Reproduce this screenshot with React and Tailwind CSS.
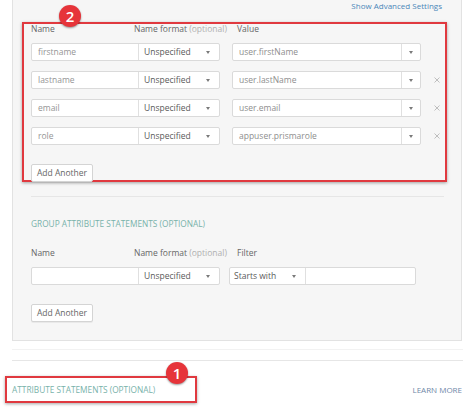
import React from 'react';

const font = { fontFamily: '"Open Sans", "Liberation Sans", sans-serif' };

const Caret = () => (
  <svg width="4" height="3" viewBox="0 0 4 3" className="shrink-0">
    <path d="M0 0 L4 0 L2 3 Z" fill="#7a7a7a" />
  </svg>
);

const Cross = () => (
  <svg width="6" height="6" viewBox="0 0 6 6">
    <path d="M0.5 0.5 L5.5 5.5 M5.5 0.5 L0.5 5.5" stroke="#b8b8b8" strokeWidth="0.9" />
  </svg>
);

const Badge = ({ n, className }) => (
  <div
    className={`absolute w-[22px] h-[22px] rounded-full bg-[#e6343a] shadow-[0_1px_2px_rgba(0,0,0,0.4)] flex items-center justify-center text-white text-[15px] font-semibold leading-none ${className}`}
  >
    {n}
  </div>
);

const NameFormat = ({ name }) => (
  <div className="flex h-[18px] w-[189px] bg-white border border-[#dadada] rounded-[2px] text-[8.5px]">
    <div className="w-[107px] flex items-center pl-[6px] text-[#959595] border-r border-[#e0e0e0]">{name}</div>
    <div className="flex-1 flex items-center justify-between pl-[5px] pr-[9px] text-[#5a5a5a]">
      <span>Unspecified</span>
      <Caret />
    </div>
  </div>
);

const AddAnother = () => (
  <button className="h-[18px] w-[62px] bg-white border border-[#d4d4d4] rounded-[2px] text-[8.5px] text-[#666] shadow-[0_1px_0_rgba(0,0,0,0.05)]">
    Add Another
  </button>
);

const rows = [
  { name: 'firstname', value: 'user.firstName', x: false },
  { name: 'lastname', value: 'user.lastName', x: true },
  { name: 'email', value: 'user.email', x: true },
  { name: 'role', value: 'appuser.prismarole', x: true },
];

export default function App() {
  return (
    <div className="relative w-[474px] h-[408px] bg-white overflow-hidden" style={font}>
      <div className="ml-[12px] w-[450px] bg-[#f6f6f6] border-x border-b border-[#e2e2e2] pb-[18px]">
        <div className="h-[22px] flex justify-end pr-[19px] pt-[1px]">
          <span className="text-[8px] leading-[10px] text-[#4b87b9]">Show Advanced Settings</span>
        </div>

        <div className="ml-[9px] w-[425px] h-[160px] border-2 border-[#e0393f] shadow-[0_1px_3px_rgba(0,0,0,0.35)] pl-[7px]">
          <div className="flex text-[8.5px] leading-[10px] text-[#666]">
            <span className="w-[103px]">Name</span>
            <span className="w-[103px]">
              Name format <span className="text-[#b0b0b0]">(optional)</span>
            </span>
            <span>Value</span>
          </div>
          <div className="mt-[9px] flex flex-col gap-[10px]">
            {rows.map((r) => (
              <div key={r.name} className="flex items-center">
                <NameFormat name={r.name} />
                <div className="ml-[12px] flex h-[18px] w-[189px] bg-white border border-[#dadada] rounded-[2px] text-[8.5px]">
                  <div className="flex-1 flex items-center pl-[6px] text-[#8e8e8e] border-r border-[#e0e0e0]">{r.value}</div>
                  <div className="w-[18px] flex items-center justify-center">
                    <Caret />
                  </div>
                </div>
                <div className="ml-[12px] w-[8px] flex justify-center">{r.x && <Cross />}</div>
              </div>
            ))}
          </div>
          <div className="mt-[13px]">
            <AddAnother />
          </div>
        </div>

        <div className="mt-[14px] ml-[18px] w-[413px] h-px bg-[#e6e6e6]" />

        <div className="ml-[18px] mt-[22px] text-[8.3px] leading-[10px] text-[#78b2aa]">
          GROUP ATTRIBUTE STATEMENTS (OPTIONAL)
        </div>

        <div className="ml-[18px] mt-[19px] flex text-[8.5px] leading-[10px] text-[#666]">
          <span className="w-[103px]">Name</span>
          <span className="w-[103px]">
            Name format <span className="text-[#b0b0b0]">(optional)</span>
          </span>
          <span>Filter</span>
        </div>

        <div className="ml-[18px] mt-[9px] flex">
          <NameFormat name="" />
          <div className="ml-[9px] flex h-[18px] w-[187px] bg-white border border-[#dadada] rounded-[2px] text-[8.5px]">
            <div className="w-[76px] flex items-center justify-between pl-[4px] pr-[9px] text-[#5a5a5a] border-r border-[#e0e0e0]">
              <span>Starts with</span>
              <Caret />
            </div>
            <div className="flex-1" />
          </div>
        </div>

        <div className="ml-[18px] mt-[13px]">
          <AddAnother />
        </div>
      </div>

      <div className="mt-[8px] ml-[12px] w-[451px] h-px bg-[#f2f2f2]" />
      <div className="mt-[10px] ml-[12px] w-[451px] h-px bg-[#e6e6e6]" />

      <div className="mt-[15px] ml-[5px] w-[457px] flex items-center justify-between">
        <div className="h-[27px] w-[192px] border-2 border-[#e0393f] shadow-[0_1px_3px_rgba(0,0,0,0.35)] flex items-center pl-[5px]">
          <span className="text-[8.3px] leading-[10px] text-[#78b2aa]">ATTRIBUTE STATEMENTS (OPTIONAL)</span>
        </div>
        <span className="text-[8px] leading-[10px] text-[#6f88a8]">LEARN MORE</span>
      </div>

      <Badge n="2" className="left-[59px] top-[5px]" />
      <Badge n="1" className="left-[166px] top-[362px]" />
    </div>
  );
}
